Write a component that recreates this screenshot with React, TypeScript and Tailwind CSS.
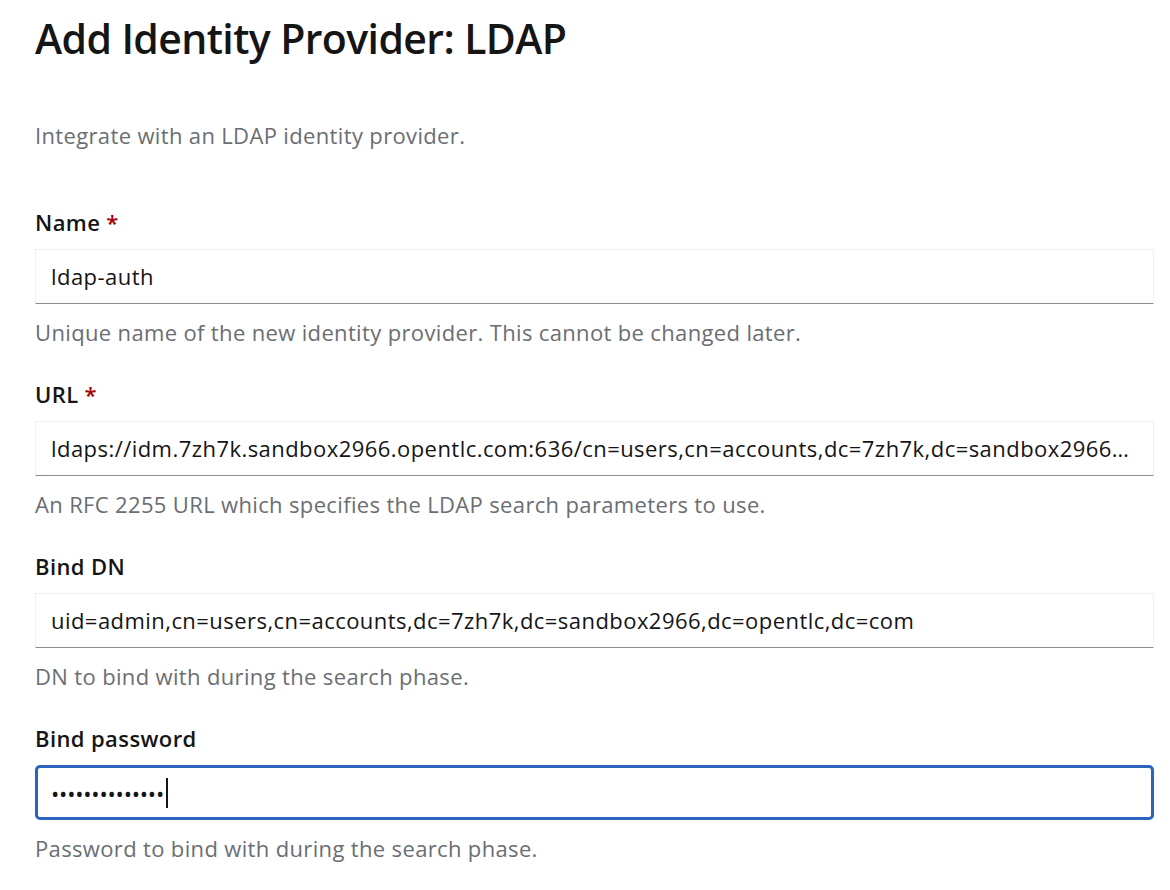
import type { ReactNode } from "react";

interface FieldProps {
  label: string;
  required?: boolean;
  helper: string;
  children: ReactNode;
}

function Field({ label, required, helper, children }: FieldProps) {
  return (
    <div className="flex flex-col">
      <div className="h-[30px] text-[22px] font-semibold leading-[30px] tracking-[0.4px] text-[#151515]">
        {label}
        {required && <span className="ml-[6px] text-[#a30000]">*</span>}
      </div>
      <div className="mt-[12px]">{children}</div>
      <div className="mt-[13px] h-[30px] text-[22px] leading-[30px] tracking-[0.35px] text-[#6a6e73]">{helper}</div>
    </div>
  );
}

function TextBox({ value }: { value: string }) {
  return (
    <div className="flex h-[55px] w-full items-center border border-[#f0f0f0] border-b-[#8a8d90] bg-white pl-[15px] pr-[18px]">
      <span className="truncate text-[22px] tracking-[0.45px] text-[#151515]">{value}</span>
    </div>
  );
}

function PasswordBox({ length }: { length: number }) {
  return (
    <div className="flex h-[55px] w-full items-center rounded-[5px] border-[3px] border-[#2b63bf] bg-white px-[13px]">
      <span className="text-[22px] leading-none tracking-[-0.2px] text-[#151515]">{"•".repeat(length)}</span>
      <span className="ml-[2px] h-[30px] w-[2px] bg-[#151515]" />
    </div>
  );
}

export default function App() {
  return (
    <div
      className="min-h-[890px] w-[1170px] bg-white pl-[35px] pr-[16px] pt-[14px]"
      style={{ fontFamily: '"Open Sans", "Liberation Sans", sans-serif' }}
    >
      <h1 className="text-[41px] font-semibold leading-[48px] tracking-[-0.6px] text-[#151515]">
        Add Identity Provider: LDAP
      </h1>
      <p className="mt-[58px] text-[22px] leading-[30px] tracking-[0.35px] text-[#6a6e73]">
        Integrate with an LDAP identity provider.
      </p>
      <form className="mt-[57px] flex flex-col gap-[32px]" onSubmit={(e) => e.preventDefault()}>
        <Field label="Name" required helper="Unique name of the new identity provider. This cannot be changed later.">
          <TextBox value="ldap-auth" />
        </Field>
        <Field label="URL" required helper="An RFC 2255 URL which specifies the LDAP search parameters to use.">
          <TextBox value="ldaps://idm.7zh7k.sandbox2966.opentlc.com:636/cn=users,cn=accounts,dc=7zh7k,dc=sandbox2966,dc=opentlc,dc=com?uid" />
        </Field>
        <Field label="Bind DN" helper="DN to bind with during the search phase.">
          <TextBox value="uid=admin,cn=users,cn=accounts,dc=7zh7k,dc=sandbox2966,dc=opentlc,dc=com" />
        </Field>
        <Field label="Bind password" helper="Password to bind with during the search phase.">
          <PasswordBox length={14} />
        </Field>
      </form>
    </div>
  );
}
